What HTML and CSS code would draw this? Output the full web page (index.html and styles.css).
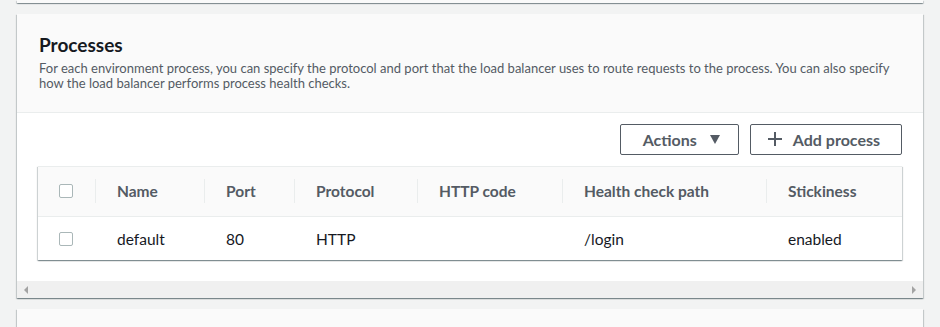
FILE: index.html
```html
<!DOCTYPE html>
<html>
<head>
<meta charset="utf-8">
<link rel="stylesheet" href="styles.css">
</head>
<body>
<div class="page">
  <div class="card card-prev"></div>
  <section class="card">
    <header class="card-header">
      <h2 class="title">Processes</h2>
      <p class="desc">For each environment process, you can specify the protocol and port that the load balancer uses to route requests to the process. You can also specify how the load balancer performs process health checks.</p>
    </header>
    <div class="card-body">
      <div class="toolbar">
        <button class="btn btn-actions">Actions <span class="caret"><svg width="10" height="9" viewBox="0 0 10 9"><path d="M0 0h10L5 9z" fill="#545b64"/></svg></span></button>
        <button class="btn btn-add"><svg class="plus" width="14" height="14" viewBox="0 0 14 14"><path d="M7 0v14M0 7h14" stroke="#545b64" stroke-width="2"/></svg>Add process</button>
      </div>
      <div class="table">
        <div class="row head">
          <div class="cell c-check"><span class="checkbox"></span></div>
          <div class="cell c-name"><span class="sep"></span>Name</div>
          <div class="cell c-port"><span class="sep"></span>Port</div>
          <div class="cell c-proto"><span class="sep"></span>Protocol</div>
          <div class="cell c-code"><span class="sep"></span>HTTP code</div>
          <div class="cell c-path"><span class="sep"></span>Health check path</div>
          <div class="cell c-stick"><span class="sep"></span>Stickiness</div>
        </div>
        <div class="row body">
          <div class="cell c-check"><span class="checkbox"></span></div>
          <div class="cell c-name">default</div>
          <div class="cell c-port">80</div>
          <div class="cell c-proto">HTTP</div>
          <div class="cell c-code"></div>
          <div class="cell c-path">/login</div>
          <div class="cell c-stick">enabled</div>
        </div>
      </div>
    </div>
    <div class="hscroll">
      <span class="arrow left"></span>
      <span class="arrow right"></span>
    </div>
  </section>
  <div class="card card-next"></div>
</div>
</body>
</html>
```
FILE: styles.css
```css
* { box-sizing: border-box; }
html, body {
  margin: 0;
  padding: 0;
  background: #f2f3f3;
  font-family: Lato, "Open Sans", sans-serif;
  color: #16191f;
  overflow: hidden;
}
.page {
  width: 906px;
  margin-left: 17px;
  display: flex;
  flex-direction: column;
  gap: 11px;
}
.card {
  background: #fff;
  box-shadow: 0 1px 1px 0 rgba(0,28,36,.3), 1px 1px 1px 0 rgba(0,28,36,.15), -1px 1px 1px 0 rgba(0,28,36,.15);
}
.card-prev {
  height: 3px;
  background: #fafafa;
}
.card-next {
  height: 40px;
  background: #fafafa;
}
.card-header {
  background: #fafafa;
  border-bottom: 1px solid #eaeded;
  padding: 19px 21px 0 22px;
  height: 99px;
}
.title {
  margin: 0;
  font-size: 19px;
  line-height: 24px;
  font-weight: 700;
  color: #16191f;
}
.desc {
  margin: 4px 0 0;
  font-size: 13px;
  line-height: 15px;
  color: #545b64;
}
.card-body {
  padding: 11px 21px 21px;
}
.toolbar {
  display: flex;
  justify-content: flex-end;
  gap: 11px;
  margin-bottom: 11px;
}
.btn {
  height: 31px;
  border: 1px solid #545b64;
  border-radius: 2px;
  background: #fff;
  color: #545b64;
  font-family: inherit;
  font-size: 16px;
  font-weight: 700;
  display: flex;
  align-items: center;
  padding: 0 0 1px;
}
.btn-actions {
  padding-left: 22px;
  padding-right: 18px;
}
.btn .caret {
  display: inline-flex;
  margin-left: 13px;
}
.btn-add {
  padding-left: 17px;
  padding-right: 21px;
}
.btn-add .plus {
  margin-right: 11px;
}
.table {
  background: #fff;
  border-top: 1px solid #eaeded;
  box-shadow: 0 1px 1px 0 rgba(0,28,36,.3), 1px 1px 1px 0 rgba(0,28,36,.15), -1px 1px 1px 0 rgba(0,28,36,.15);
}
.row {
  display: grid;
  grid-template-columns: 57px 109px 90px 123px 145px 204px 136px;
  align-items: center;
}
.row.head {
  height: 50px;
  background: #fafafa;
  border-bottom: 1px solid #eaeded;
  font-weight: 700;
  color: #545b64;
  font-size: 15.5px;
  padding-bottom: 1px;
}
.row.body {
  height: 43px;
  font-size: 15.5px;
  color: #16191f;
}
.cell {
  position: relative;
  padding-left: 22px;
  white-space: nowrap;
}
.c-check {
  padding-left: 21px;
  display: flex;
  align-items: center;
}
.sep {
  position: absolute;
  left: 0;
  top: 50%;
  margin-top: -12px;
  height: 24px;
  border-left: 1px solid #eaeded;
}
.checkbox {
  display: block;
  width: 14px;
  height: 14px;
  border: 1px solid #aab7b8;
  border-radius: 2px;
  background: #fff;
}
.hscroll {
  height: 17px;
  background: #f0f0f0;
  display: flex;
  justify-content: space-between;
  align-items: center;
  padding: 0 7px;
}
.arrow {
  width: 0;
  height: 0;
  border-top: 4px solid transparent;
  border-bottom: 4px solid transparent;
}
.arrow.left { border-right: 4px solid #a3a3a3; }
.arrow.right { border-left: 4px solid #a3a3a3; }
```
